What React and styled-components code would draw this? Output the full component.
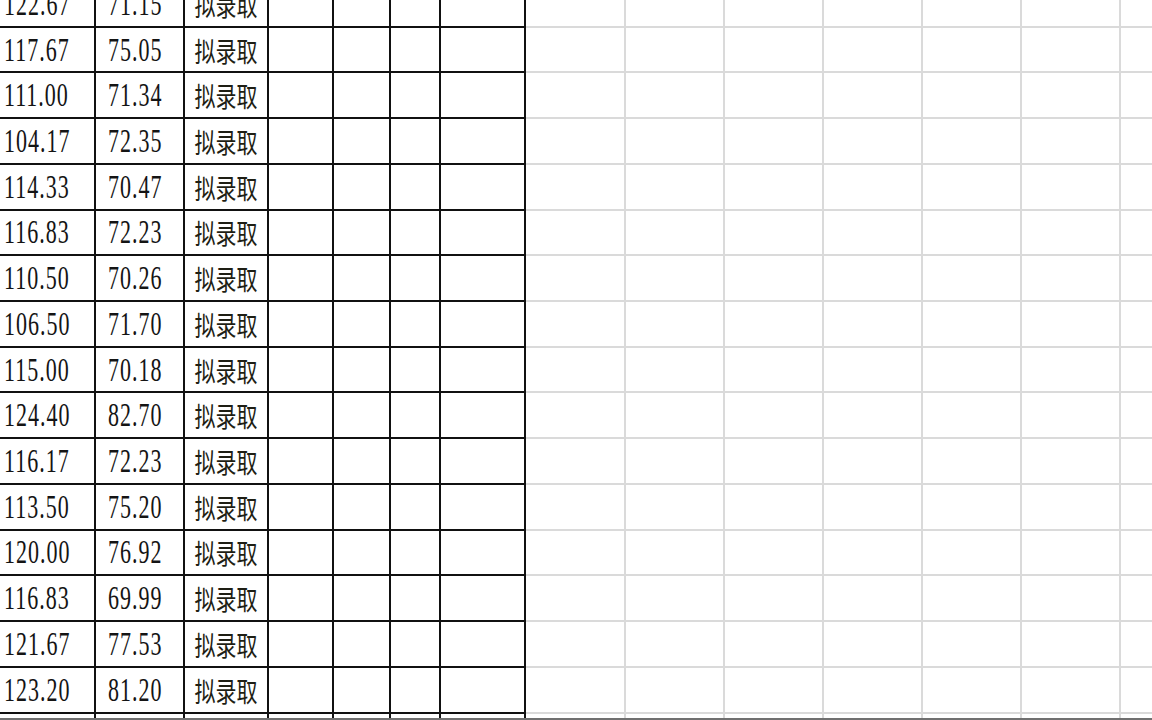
import React from 'react';
import styled, { createGlobalStyle } from 'styled-components';

const GlobalStyle = createGlobalStyle`
  html, body {
    margin: 0;
    padding: 0;
    background: #ffffff;
  }
  #root {
    height: 720px;
  }
`;

const tableCols = [96, 89, 84, 65, 57, 50, 85];
const gridCols = [100, 99, 99, 99, 99, 99, 99];

const rows = [
  ['122.67', '71.15'],
  ['117.67', '75.05'],
  ['111.00', '71.34'],
  ['104.17', '72.35'],
  ['114.33', '70.47'],
  ['116.83', '72.23'],
  ['110.50', '70.26'],
  ['106.50', '71.70'],
  ['115.00', '70.18'],
  ['124.40', '82.70'],
  ['116.17', '72.23'],
  ['113.50', '75.20'],
  ['120.00', '76.92'],
  ['116.83', '69.99'],
  ['121.67', '77.53'],
  ['123.20', '81.20'],
  null,
];

const Page = styled.div`
  height: 720px;
  overflow: hidden;
  display: flex;
  flex-direction: column;
  background: #fff;
`;

const Sheet = styled.div`
  flex: 1;
  overflow: hidden;
  margin-top: -18px;
  display: grid;
  grid-template-columns: ${[...tableCols, ...gridCols].map((w) => `${w}px`).join(' ')};
  grid-auto-rows: 45.73px;
  align-content: start;
`;

const Cell = styled.div`
  box-sizing: border-box;
  display: flex;
  align-items: center;
  justify-content: ${({ $align }) => $align || 'flex-start'};
  padding-left: ${({ $pad }) => $pad || 0}px;
  border-right: 2px solid ${({ $ruled }) => ($ruled ? '#111' : '#dadada')};
  border-bottom: 2px solid ${({ $ruled }) => ($ruled ? '#111' : '#dadada')};
  overflow: hidden;
  white-space: nowrap;
`;

const Num = styled.span`
  display: inline-block;
  font-family: "Liberation Serif", "DejaVu Serif", serif;
  font-size: 22px;
  letter-spacing: 1px;
  color: #141414;
  transform: scaleY(1.5);
  transform-origin: center;
`;

const Label = styled.span`
  display: inline-block;
  font-family: "Noto Sans CJK SC", "Noto Sans", sans-serif;
  font-size: 21px;
  color: #1e1e14;
  transform: scaleY(1.32);
  transform-origin: center;
`;

const ScreenEdge = styled.div`
  height: 2px;
  flex: none;
  background: #707070;
`;

export default function App() {
  return (
    <>
      <GlobalStyle />
      <Page>
        <Sheet>
          {rows.map((r, i) => (
            <React.Fragment key={i}>
              <Cell $ruled $pad={4}>{r && <Num>{r[0]}</Num>}</Cell>
              <Cell $ruled $pad={12}>{r && <Num>{r[1]}</Num>}</Cell>
              <Cell $ruled $align="center">{r && <Label>拟录取</Label>}</Cell>
              {tableCols.slice(3).map((_, j) => (
                <Cell key={`t${j}`} $ruled />
              ))}
              {gridCols.map((_, j) => (
                <Cell key={`g${j}`} />
              ))}
            </React.Fragment>
          ))}
        </Sheet>
        <ScreenEdge />
      </Page>
    </>
  );
}
